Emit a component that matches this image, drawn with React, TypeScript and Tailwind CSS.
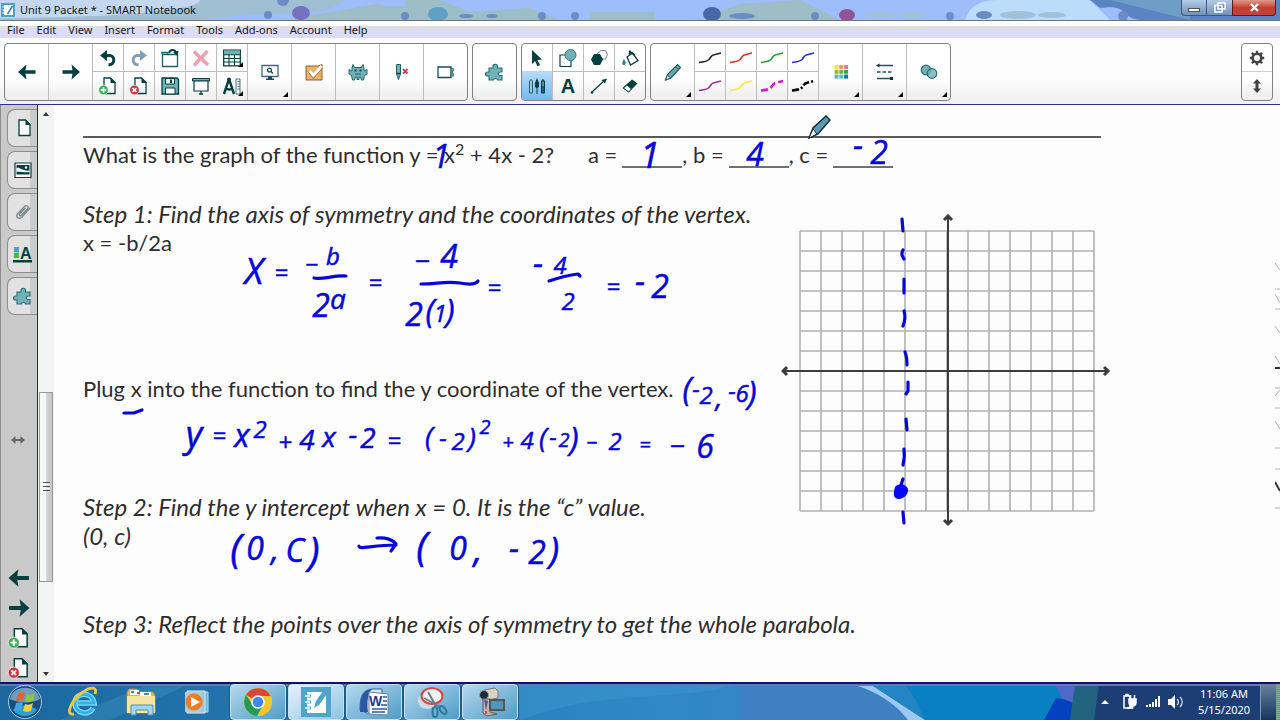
import React from "react";

const DARK = "#063f3f";
const TEAL = "#6fb3b8";
const INK = "#0505dc";

type IconProps = { size?: number; children: React.ReactNode };

function Icon({ size = 24, children }: IconProps) {
  return (
    <svg width={size} height={size} viewBox="0 0 24 24" fill="none" aria-hidden="true" className="shrink-0">
      {children}
    </svg>
  );
}

const ArrowLeft = () => (
  <Icon>
    <path d="M3 12L11.5 4.5L10.5 10.3H20.5V13.7H10.5L11.5 19.5Z" fill={DARK} />
  </Icon>
);
const ArrowRight = () => (
  <Icon>
    <path d="M21 12L12.5 4.5L13.5 10.3H3.5V13.7H13.5L12.5 19.5Z" fill={DARK} />
  </Icon>
);
const Undo = ({ color = DARK, flip = false }: { color?: string; flip?: boolean }) => (
  <Icon>
    <g transform={flip ? "translate(24 0) scale(-1 1)" : undefined}>
      <path d="M8 9.5H13.5A4.3 4.6 0 0 1 13.5 18.7H12.5" stroke={color} strokeWidth="3" />
      <path d="M4 9.5L11 4V15Z" fill={color} />
    </g>
  </Icon>
);
const PageIcon = ({ badge }: { badge?: "add" | "remove" }) => (
  <Icon>
    <path d="M8 4H14.5L19 8.5V19.5H8Z" fill="#fff" stroke={DARK} strokeWidth="1.3" />
    <path d="M14.5 3.500V9H20Z" fill={DARK} />
    {badge && <circle cx="7.5" cy="16" r="4.8" fill={badge === "add" ? "#3fae5b" : "#c93645"} stroke="#fff" strokeWidth=".6" />}
    {badge === "add" && <path d="M7.5 13.2V18.8M4.7 16H10.3" stroke="#fff" strokeWidth="1.6" />}
    {badge === "remove" && <path d="M5.5 14L9.5 18M9.5 14L5.5 18" stroke="#fff" strokeWidth="1.6" />}
  </Icon>
);
const OpenIcon = () => (
  <Icon>
    <path d="M4 8.5V6.5H9L10.5 8.5M4.5 8.5H19.5V20.5H4.5Z" fill="#fff" stroke="#1f6068" strokeWidth="1.3" />
    <path d="M11 7C12 3.5 16 3 18 6" stroke={DARK} strokeWidth="2" />
    <path d="M15 6.5L20.5 4.5L19.5 10Z" fill={DARK} />
  </Icon>
);
const DeleteIcon = () => (
  <Icon>
    <path d="M5 5.5L19 19M18.5 5L5 19.5" stroke="#ef9db2" strokeWidth="3.4" />
  </Icon>
);
const TableIcon = () => (
  <Icon>
    <path d="M3.7 4.2H20.3V19.8H3.7Z" fill="#fff" stroke={DARK} strokeWidth="1.3" />
    <path d="M4 4.5H20V8.5H4Z" fill={TEAL} />
    <path d="M4 8.8H20M4 12.5H20M4 16H20M9 8.5V20M14.5 8.5V20" stroke={DARK} strokeWidth="1.1" />
  </Icon>
);
const SaveIcon = () => (
  <Icon>
    <path d="M4 4H19L20.5 5.5V20H4Z" fill={TEAL} stroke={DARK} strokeWidth="1.3" />
    <path d="M7.5 4.5H16.5V10H7.5Z" fill="#e8f3f4" stroke={DARK} />
    <path d="M13 5.5V9" stroke={DARK} strokeWidth="2" />
    <path d="M7.5 14H17V20H7.5Z" fill="#fff" stroke={DARK} />
  </Icon>
);
const ScreenIcon = () => (
  <Icon>
    <path d="M3.5 4.5H20.5V7H3.5Z" fill={TEAL} stroke={DARK} />
    <path d="M5 7H19V17H5Z" fill="#fff" stroke={DARK} strokeWidth="1.2" />
    <path d="M12 17V20M10 20H14" stroke={DARK} strokeWidth="1.4" />
  </Icon>
);
const MeasureIcon = () => (
  <Icon>
    <path d="M8.5 6.5L4 20M9.5 6.5L14 20M5.5 14C8 16 10.5 16 13 14" stroke={DARK} strokeWidth="2.4" />
    <circle cx="9" cy="5.5" r="2" fill={DARK} />
    <path d="M16 5H20V20H16Z" fill="#fff" stroke="#4d7379" />
    <path d="M17.5 7.5H20M17.5 10H20M17.5 12.500H20M17.500 15H20" stroke="#4d7379" />
  </Icon>
);
const MonitorIcon = () => (
  <Icon>
    <path d="M4 5.500H20V16.500H4Z" fill="#fff" stroke="#3b6a7d" strokeWidth="1.300" />
    <circle cx="11.500" cy="10" r="1.900" stroke="#17495f" strokeWidth="1.300" />
    <path d="M13 11.500L15 13.500" stroke="#17495f" strokeWidth="1.500" />
    <path d="M10 16.500H14V18.500H16V20H8V18.500H10Z" fill="#17495f" />
  </Icon>
);
const CheckIcon = () => (
  <Icon>
    <path d="M4 6H16L20 4.500V20H4Z" fill="#efb163" stroke="#8a6330" />
    <path d="M7.500 11L11.500 15.500L19.500 6" stroke="#fff" strokeWidth="3" />
    <path d="M5.500 11L11.500 18.500L20.500 8" stroke="#8a6330" strokeWidth=".7" />
  </Icon>
);
const MonsterIcon = () => (
  <Icon>
    <path
      d="M7 4.500L8.500 7.500H15.500L17 4.500L18 8V11L21 9.500V14L18.500 15.500L17.500 20H15.500L14.500 17H13V19.500H11V17H9.500L8.500 20H6.500L5.500 15.500L3 14V9.500L6 11V8Z"
      fill={TEAL}
      stroke="#24606a"
    />
    <path d="M8.500 9.500H10.500V11.500H8.500ZM13.500 9.500H15.500V11.500H13.500Z" fill="#113f5c" />
    <path d="M9 14H15" stroke="#24606a" />
  </Icon>
);
const PenResetIcon = () => (
  <Icon>
    <path d="M6.500 4.500H10.500V14L8.500 19.500L6.500 14Z" fill={TEAL} stroke="#24606a" />
    <path d="M6.500 13.500H10.500" stroke={DARK} strokeWidth="1.500" />
    <path d="M13 9L17.500 13.500M17.500 9L13 13.500" stroke="#cf3e55" strokeWidth="1.800" />
  </Icon>
);
const TagIcon = () => (
  <Icon>
    <path d="M4 7H17V17.500H4Z" fill="#fff" stroke="#17495f" strokeWidth="1.300" />
    <path d="M17 8.500H19.500V11H18.500V13.500H19.500V16H17Z" fill={TEAL} stroke="#24606a" strokeWidth=".8" />
  </Icon>
);
const PuzzleIcon = () => (
  <Icon>
    <path
      d="M6 8H10V6.500A2.200 2.200 0 1 1 14.500 6.500V8H19V12H17.500A1.800 1.800 0 1 0 17.500 15.500H19V20H14.500A2 1.500 0 0 0 10.500 20H6V16H4.500A2 2 0 1 1 4.500 12H6Z"
      fill={TEAL}
      stroke="#2b6d75"
      strokeWidth="1.100"
    />
  </Icon>
);
const PointerIcon = () => (
  <Icon>
    <path d="M7 4L17 13.500L12.500 14L15 19L12.500 20.200L10 15L7 18Z" fill={DARK} />
  </Icon>
);
const ShapesIcon = () => (
  <Icon>
    <path d="M4 9H15V20.500H4Z" fill="#fff" stroke={DARK} strokeWidth="1.200" />
    <circle cx="14.500" cy="9" r="5.500" fill={TEAL} stroke="#3a7b82" />
  </Icon>
);
const HexIcon = () => (
  <Icon>
    <path d="M14 4.500H18.500L20.500 8.500L18.500 13H12L10 8Z" fill="#fff" stroke="#6f8b8d" />
    <path d="M7 8H13L16 13.500L13 19H7L4 13.500Z" fill={DARK} />
  </Icon>
);
const FillIcon = () => (
  <Icon>
    <path d="M9 11L14.500 7L20 14.500L12.500 19Z" fill="#fff" stroke={DARK} strokeWidth="1.300" />
    <path d="M11 5L16.500 9M11.500 8.500L12 4.500" stroke={DARK} strokeWidth="1.800" />
    <path d="M6 13C3 17 4.500 19 6 19S9 17 6 13Z" fill="#3b7c92" />
  </Icon>
);
const PensIcon = () => (
  <Icon>
    <path d="M4.500 8C4.500 5 7.500 5 7.500 8V19H4.500Z" fill="#9cc9dd" stroke="#24606a" />
    <path d="M12 4L14 9V13L12.500 14V20H11.500V14L10 13V9Z" fill={DARK} />
    <path d="M16.500 8C16.500 5 19.500 5 19.500 8V19H16.500Z" fill="#24606a" stroke={DARK} />
    <path d="M18 8V12" stroke="#9cc9dd" />
  </Icon>
);
const LineIcon = () => (
  <Icon>
    <path d="M5 18L18 6" stroke={DARK} strokeWidth="1.300" />
    <circle cx="5" cy="18.500" r="1.300" fill={DARK} />
    <path d="M20 4.500L14.500 6L18 9.500Z" fill={DARK} />
  </Icon>
);
const EraserIcon = () => (
  <Icon>
    <path d="M4.500 14L14 5.500L19.500 9.500L10.500 18.500Z" fill={DARK} />
    <path d="M5.500 14L9 11L13.500 15L10.500 18Z" fill="#fff" stroke={DARK} />
  </Icon>
);
const PencilIcon = () => (
  <Icon>
    <path d="M4.500 20L6.500 14.500L16.500 4.500L19.500 7.500L10 18Z" fill="#68a8b5" stroke="#255760" strokeWidth="1.200" />
    <path d="M4.500 20L6.500 15L9.500 18Z" fill="#fff" stroke="#255760" />
    <path d="M14.500 6.500L17.500 9.500" stroke="#255760" />
  </Icon>
);
const Stroke = ({ color, dash, width = 1.6 }: { color: string; dash?: string; width?: number }) => (
  <Icon>
    <path d="M1 16.500C6 16 9 15.500 11 13.500C13 11 13 9 17 8.500L23 7" stroke={color} strokeWidth={width} strokeDasharray={dash} />
  </Icon>
);
const paletteRows = [
  ["#f3df3c", "#ef9a5e", "#e8788c"],
  ["#9db63a", "#6cb83e", "#22b14c"],
  ["#62b6c9", "#4fc3c0", "#1773a8"],
];
const PaletteIcon = () => (
  <Icon>
    {paletteRows.map((row, r) =>
      row.map((c, i) => <rect key={c} x={5.5 + i * 4.8} y={5 + r * 4.800} width="4" height="4" fill={c} />),
    )}
  </Icon>
);
const LineStyleIcon = () => (
  <Icon>
    <path d="M5 5.500H20M4 18.500H18" stroke="#24505f" strokeWidth="1.500" />
    <path d="M4 12H20" stroke="#24505f" strokeWidth="1.500" strokeDasharray="3.500 2" />
    <path d="M3 5.500L6.500 3.500V7.500ZM17 17H20V20H17Z" fill="#0f3444" />
  </Icon>
);
const TransparencyIcon = () => (
  <Icon>
    <circle cx="9" cy="10" r="4.800" fill={TEAL} stroke="#2b6d75" strokeWidth="1.200" />
    <circle cx="15" cy="13.500" r="4.800" fill={TEAL} fillOpacity=".8" stroke="#2b6d75" strokeWidth="1.200" />
  </Icon>
);
const GearIcon = () => (
  <Icon>
    <circle cx="12" cy="12" r="4.300" stroke="#444" strokeWidth="2.600" />
    <path d="M12 4.800V7M12 17V19.200M4.800 12H7M17 12H19.200M6.900 6.900L8.500 8.500M15.500 15.500L17.100 17.100M17.100 6.900L15.500 8.500M8.500 15.500L6.900 17.100" stroke="#444" strokeWidth="2.400" />
  </Icon>
);
const UpDownIcon = () => (
  <Icon>
    <path d="M12 5L16 9.500H13.500V14.500H16L12 19L8 14.500H10.500V9.500H8Z" fill="#444" />
  </Icon>
);
const GalleryIcon = () => (
  <Icon>
    <path d="M4 5H20V19.500H4Z" fill="#fff" stroke={DARK} strokeWidth="1.200" />
    <path d="M5.500 7H18.500V14H5.500Z" fill={DARK} />
    <path d="M5.500 10C9 9 12 13.500 18.500 12.500V16.500H5.500Z" fill="#fff" />
    <path d="M5.500 14C9 13 14 15 18.500 14V16.500H5.500Z" fill={DARK} />
    <circle cx="15" cy="9.500" r="1.300" fill="#fff" />
  </Icon>
);
const ClipIcon = () => (
  <Icon>
    <path
      d="M19 8L11 17C8 20 4 17 6.500 14L13.500 6.500C15.500 4.500 18.500 6.500 16.500 9L10.500 15C9 16.500 7.500 15 9 13.500L14 8.500"
      stroke="#7d898c"
      strokeWidth="1.400"
      strokeLinecap="round"
    />
  </Icon>
);

type ToolProps = {
  label: string;
  children: React.ReactNode;
  big?: boolean;
  menu?: boolean;
  active?: boolean;
  first?: boolean;
};

function toolSize(big?: boolean, first?: boolean) {
  if (big) return first ? "row-span-2 w-[43px]" : "row-span-2 w-11 border-l border-[#bdbdbd]";
  return first ? "w-[30px]" : "w-[31px] border-l border-[#bdbdbd]";
}

function Tool({ label, children, big, menu, active, first }: ToolProps) {
  return (
    <button
      type="button"
      aria-label={label}
      className={`relative flex items-center justify-center ${toolSize(big, first)} ${big ? "" : "h-7"} ${
        active ? "bg-gradient-to-b from-[#b3dcfb] to-[#72b9f3]" : ""
      }`}
    >
      {children}
      {menu && (
        <span
          className={`absolute border-b-[5px] border-l-[5px] border-b-black border-l-transparent ${
            big ? "bottom-[3px] right-[3px]" : "bottom-1 right-1"
          }`}
        />
      )}
    </button>
  );
}

/* Two tools, one above the other, with a hairline between them. */
function ToolPair({ children }: { children: React.ReactNode }) {
  return <div className="row-span-2 flex flex-col divide-y divide-[#cfcfcf]">{children}</div>;
}

function ToolGroup({ children }: { children: React.ReactNode }) {
  return (
    <div className="grid h-[58px] grid-flow-col grid-rows-2 overflow-hidden rounded border border-[#808080] bg-gradient-to-b from-white from-60% to-[#f0f0f0] to-90%">
      {children}
    </div>
  );
}

function TitleBar() {
  return (
    <header className="relative flex h-[21px] shrink-0 justify-between overflow-hidden border-b border-[#6c7480] bg-[#9dbdfb]">
      <svg className="absolute inset-0 h-full w-full" viewBox="0 0 1280 20" preserveAspectRatio="none" aria-hidden="true">
        <path d="M195 0H345L330 9C300 16 250 12 200 20H0V10Z" fill="#a0bfd2" />
        <path d="M0 0H200C200 8 150 17 0 18Z" fill="#c3d8ee" />
        <path d="M285 20L400 0H440L470 12L530 8L560 20ZM590 12H655V20H590ZM740 4L800 0L840 20H700Z" fill="#9dbec6" />
        <path d="M365 0H405V6H385Z" fill="#9dbdfb" />
        <path d="M965 20C970 5 980 0 1000 0H1090L1110 20Z" fill="#bcdcfb" />
        <path d="M1090 0H1280V20H1140C1120 18 1130 4 1100 8Z" fill="#5b84c2" />
        <path d="M1110 0H1190V20Z" fill="#6f9dc6" />
        <g fill="#a1c2d6">
          <ellipse cx="880" cy="15" rx="16" ry="3" />
          <ellipse cx="912" cy="15" rx="14" ry="3" />
          <ellipse cx="1018" cy="15" rx="18" ry="4" />
          <ellipse cx="1052" cy="15" rx="14" ry="3" />
        </g>
        <g fill="#6c8cc4">
          <circle cx="283" cy="0" r="6" />
          <circle cx="268" cy="15" r="4" />
          <circle cx="405" cy="16" r="4" />
          <circle cx="542" cy="16" r="4" />
          <circle cx="575" cy="16" r="4" />
          <circle cx="950" cy="16" r="4" />
          <circle cx="815" cy="16" r="4" />
          <circle cx="1123" cy="16" r="5" />
          <ellipse cx="742" cy="16" rx="13" ry="3" />
          <ellipse cx="984" cy="15" rx="8" ry="4" />
          <ellipse cx="466" cy="16" rx="7" ry="2" />
          <ellipse cx="492" cy="16" rx="6" ry="2" />
        </g>
        <ellipse cx="301" cy="13" rx="9" ry="7" fill="#7472c0" />
        <ellipse cx="438" cy="14" rx="10" ry="7" fill="#5fa0c4" />
        <ellipse cx="712" cy="14" rx="9" ry="7" fill="#4668a8" />
        <ellipse cx="847" cy="15" rx="8" ry="6" fill="#8f5596" />
      </svg>
      <div className="relative flex items-center gap-[5px] pl-px">
        <svg width="14" height="14" viewBox="0 0 14 14" aria-hidden="true">
          <path d="M0 0H14V14H0Z" fill="#4ba3c4" />
          <path d="M3 2H12V12H3Z" fill="#fff" />
          <path d="M1.500 4H4M1.500 7H4M1.500 10H4" stroke="#fff" />
          <path d="M6.500 11L11.500 3" stroke="#337f9d" strokeWidth="1.500" />
        </svg>
        <h1 className="text-[11px] leading-4 text-[#101820]">Unit 9 Packet * - SMART Notebook</h1>
      </div>
      <div className="relative flex h-4 self-start pr-1">
        <button type="button" aria-label="Minimize" className="flex w-[26px] items-end justify-center rounded-bl border border-t-0 border-[#3f5878] bg-gradient-to-b from-[#b4cbe4] to-[#6f91b8] pb-[3px]">
          <span className="h-1 w-3 border border-[#555] bg-white" />
        </button>
        <button type="button" aria-label="Restore" className="flex w-[25px] items-center justify-center border-b border-[#3f5878] bg-gradient-to-b from-[#b4cbe4] to-[#6f91b8]">
          <svg width="12" height="11" viewBox="0 0 12 11" fill="none" aria-hidden="true">
            <path d="M4 1H11V7H4ZM1 3.500H8V10H1Z" fill="#7693b5" stroke="#fff" strokeWidth="1.500" />
            <path d="M3.500 6H5.500V7.500H3.500Z" fill="#fff" />
          </svg>
        </button>
        <button type="button" aria-label="Close" className="flex w-[44px] items-center justify-center rounded-br border border-t-0 border-[#5b1c1c] bg-gradient-to-b from-[#dc9a8d] via-[#c63d30] to-[#c8423a]">
          <svg width="11" height="9" viewBox="0 0 11 9" aria-hidden="true">
            <path d="M2 1L9 8M9 1L2 8" stroke="#fff" strokeWidth="2.400" />
          </svg>
        </button>
      </div>
    </header>
  );
}

const menus = ["File", "Edit", "View", "Insert", "Format", "Tools", "Add-ons", "Account", "Help"];

function MenuBar() {
  return (
    <nav className="flex h-[17px] shrink-0 items-center gap-3 bg-[linear-gradient(to_bottom,#ffffff_0,#fafafa_28%,#dedee4_30%,#dedee8_52%,#dcdcfa_56%)] pl-[7px]">
      {menus.map((m) => (
        <button key={m} type="button" className="text-[11px] leading-4 text-[#151515]">
          {m}
        </button>
      ))}
    </nav>
  );
}

function Toolbar() {
  return (
    <div className="flex shrink-0 items-center justify-between bg-gradient-to-b from-[#fdfdfd] from-60% to-[#f2f2f2] to-90% pb-[3px] pl-1 pr-[7px] pt-[5px]">
      <div className="flex gap-1">
        <ToolGroup>
          <Tool label="Previous page" big first><ArrowLeft /></Tool>
          <Tool label="Next page" big><ArrowRight /></Tool>
          <ToolPair>
            <Tool label="Undo"><Undo /></Tool>
            <Tool label="Add page"><PageIcon badge="add" /></Tool>
          </ToolPair>
          <ToolPair>
            <Tool label="Redo"><Undo color="#7f9db4" flip /></Tool>
            <Tool label="Delete page"><PageIcon badge="remove" /></Tool>
          </ToolPair>
          <ToolPair>
            <Tool label="Open"><OpenIcon /></Tool>
            <Tool label="Save"><SaveIcon /></Tool>
          </ToolPair>
          <ToolPair>
            <Tool label="Delete"><DeleteIcon /></Tool>
            <Tool label="Screen shade"><ScreenIcon /></Tool>
          </ToolPair>
          <ToolPair>
            <Tool label="Table" menu><TableIcon /></Tool>
            <Tool label="Measurement tools" menu><MeasureIcon /></Tool>
          </ToolPair>
          <Tool label="View screens" big menu><MonitorIcon /></Tool>
          <Tool label="Response" big><CheckIcon /></Tool>
          <Tool label="Activities" big><MonsterIcon /></Tool>
          <Tool label="Reset pens" big><PenResetIcon /></Tool>
          <Tool label="Capture" big><TagIcon /></Tool>
        </ToolGroup>
        <ToolGroup>
          <Tool label="Add-ons" big first><PuzzleIcon /></Tool>
        </ToolGroup>
        <ToolGroup>
          <ToolPair>
            <Tool label="Select" first><PointerIcon /></Tool>
            <Tool label="Pens" active first><PensIcon /></Tool>
          </ToolPair>
          <ToolPair>
            <Tool label="Shapes"><ShapesIcon /></Tool>
            <Tool label="Text">
              <span className="font-['Liberation_Sans',sans-serif] text-xl font-black leading-6 text-[#063f3f]">A</span>
            </Tool>
          </ToolPair>
          <ToolPair>
            <Tool label="Regular polygons"><HexIcon /></Tool>
            <Tool label="Lines"><LineIcon /></Tool>
          </ToolPair>
          <ToolPair>
            <Tool label="Fill"><FillIcon /></Tool>
            <Tool label="Eraser"><EraserIcon /></Tool>
          </ToolPair>
        </ToolGroup>
        <ToolGroup>
          <Tool label="Pen types" big menu first><PencilIcon /></Tool>
          <ToolPair>
            <Tool label="Black pen"><Stroke color="#222" /></Tool>
            <Tool label="Purple pen"><Stroke color="#a02ba0" /></Tool>
          </ToolPair>
          <ToolPair>
            <Tool label="Red pen"><Stroke color="#e02828" /></Tool>
            <Tool label="Yellow pen"><Stroke color="#f4ec3a" /></Tool>
          </ToolPair>
          <ToolPair>
            <Tool label="Green pen"><Stroke color="#2a9a3c" /></Tool>
            <Tool label="Dashed magenta pen"><Stroke color="#e010d8" dash="7 3" width={2.6} /></Tool>
          </ToolPair>
          <ToolPair>
            <Tool label="Blue pen"><Stroke color="#2a2ae0" /></Tool>
            <Tool label="Dashed black pen"><Stroke color="#000" dash="7 2 2 2" width={2.6} /></Tool>
          </ToolPair>
          <Tool label="Colors" big menu><PaletteIcon /></Tool>
          <Tool label="Line style" big menu><LineStyleIcon /></Tool>
          <Tool label="Transparency" big menu><TransparencyIcon /></Tool>
        </ToolGroup>
      </div>
      <ToolGroup>
        <ToolPair>
          <Tool label="Settings" first><GearIcon /></Tool>
          <Tool label="Move toolbar" first><UpDownIcon /></Tool>
        </ToolPair>
      </ToolGroup>
    </div>
  );
}

const SideTab = ({ label, children }: { label: string; children: React.ReactNode }) => (
  <button
    type="button"
    aria-label={label}
    className="flex h-[38px] items-center justify-center rounded-l-lg border border-r-0 border-[#8c8c8c] bg-[linear-gradient(to_right,#e2e2e2_75%,#cacaca_78%)]"
  >
    {children}
  </button>
);

function Sidebar() {
  return (
    <aside className="flex w-[37px] shrink-0 flex-col border-l border-[#8c8c8c] bg-[#c9c9c9] pt-1">
      <div className="flex flex-col gap-1 pl-[6px]">
        <SideTab label="Page sorter"><PageIcon /></SideTab>
        <SideTab label="Gallery"><GalleryIcon /></SideTab>
        <SideTab label="Attachments"><ClipIcon /></SideTab>
        <SideTab label="Properties">
          <Icon>
            <path d="M3 5H8V10H3Z" fill="#5c9cc4" />
            <path d="M3 10.500H8V16H3Z" fill="#48b948" />
            <path d="M2 18H21V20.500H2Z" fill={DARK} />
            <text x="9" y="16.500" fontFamily="Liberation Sans" fontWeight="700" fontSize="16" fill={DARK}>A</text>
          </Icon>
        </SideTab>
        <SideTab label="Add-ons"><PuzzleIcon /></SideTab>
      </div>
      <div className="flex flex-1 items-center pl-[10px]">
        <svg width="14" height="10" viewBox="0 0 14 10" aria-hidden="true">
          <path d="M0 5L4.500 1V4H9.500V1L14 5L9.500 9V6H4.500V9Z" fill="#666" />
        </svg>
      </div>
      <div className="flex flex-col items-center gap-[2px] [&_svg]:size-7">
        <button type="button" aria-label="Previous page"><ArrowLeft /></button>
        <button type="button" aria-label="Next page"><ArrowRight /></button>
        <button type="button" aria-label="Add page"><PageIcon badge="add" /></button>
        <button type="button" aria-label="Delete page"><PageIcon badge="remove" /></button>
      </div>
    </aside>
  );
}

function ScrollBar() {
  return (
    <div className="flex w-4 shrink-0 flex-col items-center bg-[#f3f3f3]">
      <button type="button" aria-label="Scroll up" className="flex h-[17px] items-center">
        <span className="border-x-[3px] border-b-4 border-x-transparent border-b-[#333]" />
      </button>
      <div className="flex-[272]" />
      <div className="flex h-[190px] w-[14px] flex-col items-center justify-center gap-px border border-[#989898] bg-[linear-gradient(to_right,#f8f8f8_50%,#d5d5d5_55%,#c4c4c4)]">
        <span className="h-px w-[7px] bg-[#555]" />
        <span className="h-px w-[7px] bg-white" />
        <span className="h-px w-[7px] bg-[#555]" />
        <span className="h-px w-[7px] bg-white" />
        <span className="h-px w-[7px] bg-[#555]" />
      </div>
      <div className="flex-[84]" />
      <button type="button" aria-label="Scroll down" className="flex h-[17px] items-center">
        <span className="border-x-[3px] border-t-4 border-x-transparent border-t-[#333]" />
      </button>
    </div>
  );
}

const Blank = () => <span className="inline-block h-7 w-[60px] border-b-2 border-[#707070]" />;

function Graph() {
  const vertical = Array.from({ length: 15 }, (_, i) => 19 + i * 21);
  const horizontal = Array.from({ length: 15 }, (_, i) => 17 + i * 20);
  return (
    <svg width="330" height="314" viewBox="0 0 330 314" fill="none" role="img" aria-label="Coordinate grid" className="shrink-0">
      <g stroke="#b0b0b0" strokeWidth="1.600">
        {vertical.map((x) => <path key={x} d={`M${x} 17V297`} />)}
        {horizontal.map((y) => <path key={y} d={`M19 ${y}H313`} />)}
      </g>
      <g stroke="#3c3c3c" strokeWidth="2">
        <path d="M167 4V308M4 157H325" />
        <path d="M163 6L167 2L171 6M163 306L167 310L171 306M6 153L2 157L6 161M323 153L327 157L323 161" strokeWidth="3" />
      </g>
    </svg>
  );
}

type Mark = [text: string, x: number, y: number, size: number];

/* Each mark is centred on x and sits on the baseline y. */
const marks: Mark[] = [
  ["1", 441, 168, 32], ["1", 650, 168, 36], ["4", 755, 166, 32], ["-", 858, 157, 32], ["2", 879, 164, 32],
  ["X", 254, 284, 36], ["=", 281, 281, 24], ["−", 312, 273, 24], ["b", 333, 265, 24],
  ["2", 321, 317, 32], ["a", 338, 309, 28], ["=", 375, 291, 24],
  ["−", 422, 271, 28], ["4", 449, 268, 32], ["2", 414, 326, 32], ["(", 430, 323, 32], ["1", 440, 322, 24], [")", 450, 323, 32],
  ["=", 494, 296, 24], ["-", 538, 275, 32], ["4", 560, 274, 24], ["2", 568, 310, 24],
  ["=", 613, 295, 24], ["-", 640, 293, 32], ["2", 660, 298, 32],
  ["(", 687, 401, 32], ["-", 696, 398, 24], ["2", 706, 404, 24], [",", 719, 407, 28], ["-", 732, 400, 24], ["6", 742, 402, 24], [")", 752, 405, 32],
  ["y", 194, 447, 36], ["=", 219, 444, 24], ["x", 242, 447, 32], ["2", 260, 438, 24], ["+", 285, 451, 24], ["4", 307, 450, 28],
  ["x", 329, 447, 28], ["-", 353, 444, 28], ["2", 368, 448, 28], ["=", 394, 449, 24], ["(", 429, 447, 28], ["-", 443, 447, 24],
  ["2", 458, 450, 24], [")", 472, 448, 28], ["2", 485, 434, 20], ["+", 508, 449, 20], ["4", 527, 449, 24], ["(", 543, 448, 28],
  ["-", 553, 446, 24], ["2", 564, 447, 20], [")", 574, 451, 32], ["−", 592, 450, 20], ["2", 615, 450, 24], ["=", 645, 452, 20],
  ["−", 677, 456, 28], ["6", 705, 458, 32],
  ["(", 236, 563, 40], ["0", 255, 560, 32], [",", 275, 561, 32], ["C", 295, 562, 32], [")", 314, 566, 40],
  ["(", 422, 561, 40], ["0", 458, 560, 32], [",", 478, 562, 36], ["-", 514, 560, 32], ["2", 537, 564, 32], [")", 554, 563, 36],
];

const strokes = [
  "M314 278C322 280 334 275 346 276",
  "M421 284C436 284 446 281 460 283C470 285 476 284 478 281",
  "M549 281C558 278 570 275 578 274L580 276",
  "M124 413L134 413L142 410",
  "M359 546C359 550 372 545 396 545M377 538C386 537 393 540 396 544L391 551",
  "M902 219L903 231", "M903 250C901 254 902 256 904 259", "M904 279L904 293", "M904 311C906 317 905 321 903 326",
  "M905 352C907 357 907 361 907 365", "M908 382L908 391L906 394", "M906 419L907 430", "M904 449C905 456 904 461 903 465",
  "M903 479L901 485", "M903 512L904 523",
];

function InkLayer() {
  return (
    <svg className="pointer-events-none absolute left-0 top-0" width="1226" height="577" viewBox="54 105 1226 577" fill="none">
      <g fill={INK} stroke={INK} strokeWidth=".5" textAnchor="middle" className="font-['Open_Sans',sans-serif] italic">
        {marks.map(([text, x, y, size]) => (
          <text key={`${text}${x}`} x={x} y={y} fontSize={size}>{text}</text>
        ))}
      </g>
      <g stroke={INK} strokeWidth="3.200" strokeLinecap="round" strokeLinejoin="round">
        {strokes.map((d) => <path key={d} d={d} />)}
      </g>
      <path d="M895 487C898 483 906 483 908 489C909 493 904 499 899 499C893 499 893 494 895 487Z" fill="#0505ff" />
      <path d="M809 138L813 128L826 116L830 120L818 134Z" fill="#5c9bb4" stroke="#0c2a33" strokeWidth="1.400" />
      <path d="M809 138L813 129L817 134Z" fill="#fff" stroke="#0c2a33" />
    </svg>
  );
}

function NotebookPage() {
  return (
    <main className="relative flex-1 overflow-hidden bg-[#fdfdfd] pl-[29px] font-[Lato,sans-serif] text-[22px] leading-[29px] text-[#2e2e2e]">
      <div className="mt-[31px] max-w-[1018px] border-b-2 border-[#5a5a5a]" />
      <div className="mt-[2px] flex h-[29px] whitespace-nowrap">
        <p className="w-[505px]">What is the graph of the function y = x<sup className="text-base leading-none">2</sup> + 4x - 2?</p>
        <p className="flex items-start gap-[5px]">a = <Blank /></p>
        <p className="flex items-start gap-[5px]">, b = <Blank /></p>
        <p className="flex items-start gap-[5px]">, c = <Blank /></p>
      </div>
      <div className="flex whitespace-nowrap pt-[30px]">
        <div className="w-[698px] shrink-0">
          <p className="text-2xl leading-[29px] italic">Step 1: Find the axis of symmetry and the coordinates of the vertex.</p>
          <p>x = -b/2a</p>
          <p className="mt-[117px]">Plug x into the function to find the y coordinate of the vertex.</p>
          <p className="mt-[89px] text-2xl leading-[29px] italic">Step 2: Find the y intercept when x = 0. It is the “c” value.</p>
          <p className="text-2xl leading-[29px] italic">(0, c)</p>
        </div>
        <div className="pt-[15px]">
          <Graph />
        </div>
        <svg width="5" height="252" viewBox="0 0 5 252" fill="none" aria-hidden="true" className="ml-auto mt-[62px]">
          <path d="M0 2L5 9M0 28H5M0 33L5 42M0 48H5M0 65L5 72M0 95L5 103M0 127H5M0 135L5 129M0 147H5M0 160L5 168M0 187H5M0 208H5M0 247H5" stroke="#b4b4b4" />
          <path d="M0 107H5M0 221L5 230" stroke="#333" strokeWidth="2" />
        </svg>
      </div>
      <p className="mt-[59px] whitespace-nowrap text-2xl leading-[29px] italic">Step 3: Reflect the points over the axis of symmetry to get the whole parabola.</p>
      <InkLayer />
    </main>
  );
}

const TaskButton = ({ label, active, children }: { label: string; active?: boolean; children: React.ReactNode }) => (
  <button
    type="button"
    aria-label={label}
    className={`flex h-9 w-14 items-center justify-center rounded-sm border border-[#c5e2f3] shadow-[0_0_0_1px_#1f5c88] ${
      active ? "bg-gradient-to-br from-[#e6f4fb] to-[#8cc3e4]" : "bg-gradient-to-br from-[#b5d9ec] to-[#4c9cc8]"
    }`}
  >
    {children}
  </button>
);

function Taskbar() {
  return (
    <footer className="relative flex h-[38px] shrink-0 items-center justify-between overflow-hidden border-t-2 border-[#101070] bg-gradient-to-r from-[#1b689f] via-[#2f88c4] to-[#4080c0]">
      <svg className="absolute inset-0 h-full w-full" viewBox="0 0 1280 36" preserveAspectRatio="none" aria-hidden="true">
        <path d="M60 36L150 0H190L110 36Z" fill="#3d93c0" opacity=".4" />
        <path d="M520 36C600 5 680 18 740 0H518Z" fill="#3f9ad0" opacity=".4" />
        <path d="M740 0H855L925 36H740Z" fill="#3f80c2" />
        <path d="M900 0H1080L1045 36H925Z" fill="#0880c2" />
        <path d="M850 0H870L925 36H908C895 18 870 4 850 0Z" fill="#9dc8f2" />
        <path d="M870 0H905L915 15L925 36Z" fill="#2584c4" />
        <path d="M1044 36L1056 14L1078 18V36Z" fill="#0540c0" />
        <path d="M1055 0H1075V20L1062 14Z" fill="#5068c8" />
        <path d="M1075 0H1100L1094 36H1070Z" fill="#226480" />
        <path d="M1099 0H1280V36H1094Z" fill="#1c3e74" />
        <path d="M0 1H1280" stroke="#6678bd" strokeWidth="2" />
      </svg>
      <div className="relative flex items-center">
        <button type="button" aria-label="Start" className="ml-[7px] mr-[23px]">
          <svg width="36" height="36" viewBox="0 0 36 36" aria-hidden="true">
            <circle cx="18" cy="18" r="16.500" fill="#164e83" stroke="#a5cde0" />
            <path d="M3 15C6 0 30 0 33 15C25 20 11 19 3 15Z" fill="#8db9cf" opacity=".75" />
            <path d="M6 26C12 34 24 34 30 26C24 20 12 20 6 26Z" fill="#31b6df" opacity=".8" />
            <path d="M11 10C13 8 15 8 18 9L16 17C14 16 12 16 9 17Z" fill="#e9622f" />
            <path d="M20 10C23 11 25 11 28 9L26 17C23 18 21 18 18 17Z" fill="#8cc63e" />
            <path d="M9 19C12 18 14 18 16 19L14 27C11 26 9 26 7 27Z" fill="#42a5e0" />
            <path d="M18 20C21 21 23 21 26 19L24 27C21 28 19 28 16 27Z" fill="#fbd03a" />
          </svg>
        </button>
        <button type="button" aria-label="Internet Explorer" className="mr-[25px]">
          <svg width="34" height="34" viewBox="0 0 34 34" fill="none" aria-hidden="true">
            <path d="M27 23C23 31 9 29 9 18C9 7 26 6 28 18H12" stroke="#7fdcf8" strokeWidth="5.500" />
            <path d="M27 23C23 31 9 29 9 18C9 7 26 6 28 18H12" stroke="#35b3e8" strokeWidth="3" />
            <path d="M8 29C-2 31 6 14 17 7C25 1 32 2 29 9" stroke="#f0ca38" strokeWidth="2.800" />
          </svg>
        </button>
        <button type="button" aria-label="File Explorer" className="mr-[26px]">
          <svg width="32" height="32" viewBox="0 0 32 32" aria-hidden="true">
            <path d="M2 6L4 3H12L14 6H28L30 9V27H2Z" fill="#ddb95e" stroke="#a98a3a" />
            <path d="M5 4H14V9H5ZM15 6H26V10H15Z" fill="#fff" />
            <path d="M6 5H9V7H6Z" fill="#28a048" /><path d="M12 6H15V8H12Z" fill="#d24430" /><path d="M19 7H24V9H19Z" fill="#3b91d2" />
            <path d="M2 10H30V27H2Z" fill="#f7e59d" />
            <path d="M6 29V19H28V29H23V24H11V29Z" fill="#9ed7ef" stroke="#548fae" />
          </svg>
        </button>
        <button type="button" aria-label="Media Player" className="mr-[21px]">
          <svg width="26" height="26" viewBox="0 0 26 26" aria-hidden="true">
            <path d="M7 3H25V23H7Z" fill="#6eb2d4" stroke="#b0d9e9" />
            <path d="M4 2H22V24H4Z" fill="#93c4dd" stroke="#def0f6" />
            <path d="M2 3H19V23H2Z" fill="#b1cbd5" />
            <circle cx="11" cy="13" r="8.500" fill="#f07b22" />
            <path d="M8 8L17 13L8 18Z" fill="#fff" />
          </svg>
        </button>
        <div className="flex gap-[2px]">
          <TaskButton label="Chrome">
            <svg width="30" height="30" viewBox="0 0 30 30" aria-hidden="true">
              <circle cx="15" cy="15" r="14" fill="#f7c62f" />
              <path d="M15 15L3 8A14 14 0 0 1 27.500 9H15Z" fill="#dc4437" />
              <path d="M3 8A14 14 0 0 0 14 29L20 18L10 18Z" fill="#229b58" />
              <circle cx="15" cy="15" r="6.800" fill="#fff" />
              <circle cx="15" cy="15" r="5.300" fill="#4285f4" />
            </svg>
          </TaskButton>
          <TaskButton label="SMART Notebook" active>
            <svg width="30" height="30" viewBox="0 0 30 30" aria-hidden="true">
              <path d="M0 0H30V30H0Z" fill="#4fa6cb" />
              <path d="M6 5H25V26H6Z" fill="#fff" />
              <path d="M3 9H10M3 15H10M3 21H10" stroke="#4fa6cb" strokeWidth="3" />
              <path d="M4 9H9M4 15H9M4 21H9" stroke="#fff" strokeWidth="1.500" />
              <path d="M13 21L15 14L22 4H26V7L18 18Z" fill="#4fa6cb" />
            </svg>
          </TaskButton>
          <TaskButton label="Word">
            <svg width="32" height="30" viewBox="0 0 32 30" aria-hidden="true">
              <path d="M2 23C2 10 4 3 14 2H24V26H9Z" fill="#d8e4f1" stroke="#3562a3" />
              <path d="M2 25C2 10 4 3 14 2C9 8 9 16 10 25Z" fill="#2c58a3" />
              <path d="M11 5L30 7V28L11 27Z" fill="#fff" stroke="#6b81a4" />
              <path d="M25 10H29M25 14H29M23 18H29M14 22H29M14 25H27" stroke="#31549a" strokeWidth="1.600" />
              <text x="11" y="19" fontFamily="Liberation Sans" fontSize="14" fontWeight="700" fill="#1e3f88">W</text>
            </svg>
          </TaskButton>
          <TaskButton label="Snipping Tool">
            <svg width="32" height="32" viewBox="0 0 32 32" fill="none" aria-hidden="true">
              <ellipse cx="11" cy="15" rx="9" ry="8" fill="#cfdce6" />
              <ellipse cx="16" cy="10" rx="10.500" ry="8" fill="#f1f1f4" stroke="#d84545" strokeWidth="2" />
              <path d="M12 6L20 20M8 12L24 21" stroke="#707a86" strokeWidth="2" />
              <ellipse cx="19" cy="26" rx="2.500" ry="5" stroke="#26789e" strokeWidth="2" />
              <ellipse cx="27" cy="24" rx="2.500" ry="4.500" transform="rotate(-35 27 24)" stroke="#26789e" strokeWidth="2" />
            </svg>
          </TaskButton>
          <TaskButton label="Recorder">
            <svg width="30" height="32" viewBox="0 0 30 32" aria-hidden="true">
              <path d="M9 4L20 2L23 5V12L12 14Z" fill="#d8d4c8" stroke="#777" />
              <circle cx="9" cy="9" r="4.500" fill="#1d2b3b" stroke="#999" />
              <path d="M8 13H15V26L22 28L12 30L8 27Z" fill="#bbb3ac" stroke="#665f5c" />
              <path d="M9 14L13 15L11 24Z" fill="#5b54a4" />
              <path d="M15 14H29V24H15Z" fill="#4c98c3" stroke="#5a554f" strokeWidth="2" />
              <path d="M11 25V28" stroke="#d84c42" strokeWidth="2" />
            </svg>
          </TaskButton>
        </div>
      </div>
      <div className="relative flex items-center text-white">
        <button type="button" aria-label="Show hidden icons" className="mr-[13px]">
          <span className="block border-x-4 border-b-4 border-x-transparent border-b-white" />
        </button>
        <svg width="62" height="18" viewBox="0 0 62 18" fill="none" aria-hidden="true" className="mr-3">
          <path d="M2 3H8V15H2ZM4 1.500H6V3H4Z" stroke="#fff" strokeWidth="1.500" />
          <path d="M7 6H14V9C14 12 12 13 10.500 13S7 12 7 9ZM8.500 2V6M12.500 2V6M10.500 12V15H5" fill="#fff" stroke="#fff" strokeWidth="1.500" />
          <path d="M25 14V12M28 14V11M31 14V9M34 14V6M37 14V3" stroke="#fff" strokeWidth="2" />
          <path d="M46 6H49L53 2V16L49 12H46Z" fill="#fff" />
          <path d="M55 6C57 8 57 10 55 12M58 4C61 7 61 11 58 14" stroke="#d5e1f1" strokeWidth="1.200" />
        </svg>
        <div className="w-14 whitespace-nowrap text-center text-[11px] leading-4">
          <p>11:06 AM</p>
          <p>5/15/2020</p>
        </div>
        <button type="button" aria-label="Show desktop" className="ml-2 h-9 w-4 border-l border-[#7e96b4] bg-gradient-to-b from-[#6d839d] to-[#17345c]" />
        <span className="h-9 w-1 bg-[repeating-linear-gradient(to_bottom,#80a890_0_1px,#c07080_1px_2px)]" />
      </div>
    </footer>
  );
}

export default function App() {
  return (
    <div className="flex min-h-screen flex-col bg-white font-['Noto_Sans','Open_Sans',sans-serif]">
      <TitleBar />
      <MenuBar />
      <Toolbar />
      <div className="flex flex-1 border-t border-[#30308f]">
        <Sidebar />
        <div className="w-px bg-[#20208f]" />
        <ScrollBar />
        <NotebookPage />
      </div>
      <Taskbar />
    </div>
  );
}
